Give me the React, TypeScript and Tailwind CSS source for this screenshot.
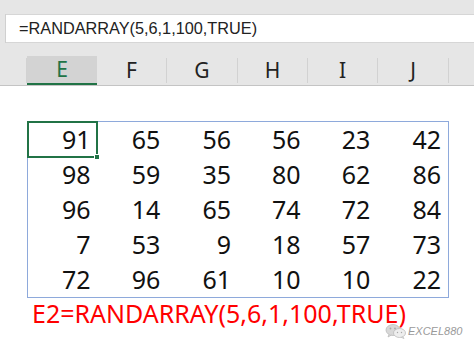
const rows: number[][] = [
  [91, 65, 56, 56, 23, 42],
  [98, 59, 35, 80, 62, 86],
  [96, 14, 65, 74, 72, 84],
  [7, 53, 9, 18, 57, 73],
  [72, 96, 61, 10, 10, 22],
];

const columns = ['E', 'F', 'G', 'H', 'I', 'J'];
const widths = ['w-[70px]', 'w-[70px]', 'w-[71px]', 'w-[70px]', 'w-[70px]', 'w-[71px]'];

function WeChatIcon() {
  return (
    <svg width="22" height="16" viewBox="0 0 22 16" fill="none">
      <ellipse cx="8" cy="7" rx="7" ry="5.5" fill="#d8d8d8" stroke="#bdbdbd" strokeWidth="0.8" />
      <path d="M4 11.5 L3 14 L6.5 12" fill="#d8d8d8" stroke="#bdbdbd" strokeWidth="0.8" />
      <ellipse cx="14.5" cy="10" rx="6" ry="4.5" fill="#eeeeee" stroke="#bdbdbd" strokeWidth="0.8" />
      <path d="M17.5 13.5 L19 15.5 L16 14.2" fill="#eeeeee" stroke="#bdbdbd" strokeWidth="0.8" />
      <circle cx="5.5" cy="5.5" r="0.9" fill="#a8a8a8" />
      <circle cx="10" cy="5.5" r="0.9" fill="#a8a8a8" />
      <circle cx="12.5" cy="9.5" r="0.7" fill="#a8a8a8" />
      <circle cx="16.5" cy="9.5" r="0.7" fill="#a8a8a8" />
    </svg>
  );
}

export default function App() {
  return (
    <div className="w-[474px] h-[349px] bg-white overflow-hidden font-['Noto_Sans',sans-serif] text-[#111]">
      {/* 상단 회색 영역 */}
      <div className="h-[14px] bg-[#e6e6e6]" />

      {/* 수식 입력줄 */}
      <div className="flex h-[29px] bg-[#e6e6e6]">
        <div className="w-[6px] border-r border-[#d0d0d0]" />
        <div className="flex-1 flex items-center bg-white border-y border-[#d6d6d6] pl-[13px] font-['Liberation_Sans',sans-serif] text-[16.3px] text-[#222]">
          =RANDARRAY(5,6,1,100,TRUE)
        </div>
      </div>
      <div className="h-[13px] bg-[#e6e6e6]" />

      {/* 열 머리글 */}
      <div className="flex h-[30px] bg-[#e6e6e6] border-b border-[#c4c4c4]">
        <div className="w-[27px] border-r border-[#d2d2d2] my-[2px]" />
        {columns.map((col, i) => (
          <div
            key={col}
            className={
              col === 'E'
                ? `${widths[i]} flex items-center justify-center bg-[#d3d3d3] border-b-2 border-[#217346] text-[#217346] text-[21px]`
                : `${widths[i]} flex items-center justify-center border-r border-[#d2d2d2] my-[2px] text-[21px] text-[#222]`
            }
          >
            {col}
          </div>
        ))}
        <div className="flex-1" />
      </div>

      {/* 데이터 영역 */}
      <div className="h-[35px]" />
      <div className="relative ml-[27px] w-[422px] border border-[#8ea9db]">
        {rows.map((row, r) => (
          <div key={r} className="flex h-[35px]">
            {row.map((value, c) => (
              <div
                key={c}
                className={`${widths[c]} flex items-center justify-end pr-[7px] text-[25px] leading-none`}
              >
                {value}
              </div>
            ))}
          </div>
        ))}
        <div className="absolute -left-px -top-px w-[71px] h-[37px] border-2 border-[#217346]">
          <div className="absolute -right-[4px] -bottom-[4px] w-[6px] h-[6px] bg-[#217346] border border-white" />
        </div>
      </div>

      {/* 설명 */}
      <div className="relative pl-[32px] pt-[1px] text-[25px] leading-[28px] text-[#ff0000]">
        E2=RANDARRAY(5,6,1,100,TRUE)
        <div className="absolute left-[385px] top-[25px] flex items-center gap-[1px]">
          <WeChatIcon />
          <span className="font-['Liberation_Sans',sans-serif] italic text-[11px] text-[#9a9a9a] leading-none">
            EXCEL880
          </span>
        </div>
      </div>
    </div>
  );
}
